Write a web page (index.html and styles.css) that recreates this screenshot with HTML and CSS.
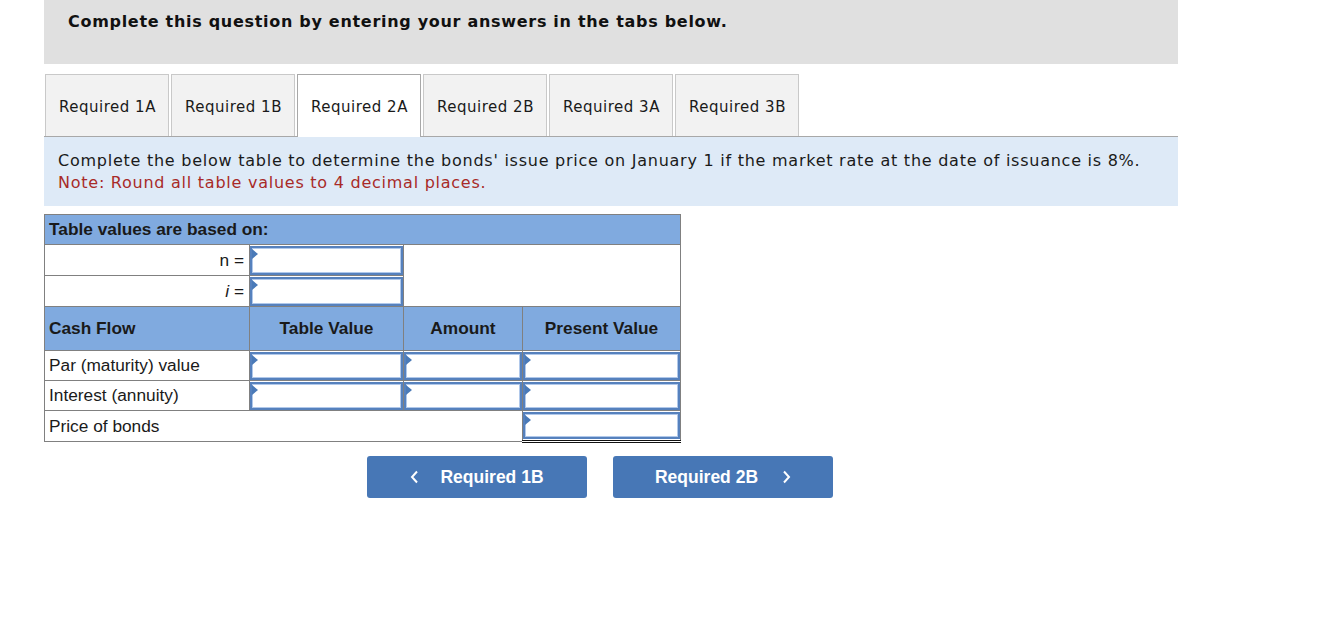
FILE: index.html
```html
<!DOCTYPE html>
<html>
<head>
<meta charset="utf-8">
<link rel="stylesheet" href="styles.css">
</head>
<body>
<div class="page">
  <div class="banner">Complete this question by entering your answers in the tabs below.</div>

  <div class="tabs">
    <div class="tab">Required 1A</div>
    <div class="tab">Required 1B</div>
    <div class="tab active">Required 2A</div>
    <div class="tab">Required 2B</div>
    <div class="tab">Required 3A</div>
    <div class="tab">Required 3B</div>
  </div>

  <div class="instructions">
    <div>Complete the below table to determine the bonds' issue price on January 1 if the market rate at the date of issuance is 8%.</div>
    <div class="note">Note: Round all table values to 4 decimal places.</div>
  </div>

  <table class="grid">
    <colgroup>
      <col class="c1"><col class="c2"><col class="c3"><col class="c4">
    </colgroup>
    <tr class="r-head1">
      <th colspan="4" class="left">Table values are based on:</th>
    </tr>
    <tr class="r-31">
      <td class="label-right">n =</td>
      <td class="inp"><div class="box"><span class="tri"></span></div></td>
      <td colspan="2" rowspan="2" class="blank"></td>
    </tr>
    <tr class="r-31">
      <td class="label-right"><i>i</i> =</td>
      <td class="inp"><div class="box"><span class="tri"></span></div></td>
    </tr>
    <tr class="r-head2">
      <th class="left">Cash Flow</th>
      <th>Table Value</th>
      <th>Amount</th>
      <th>Present Value</th>
    </tr>
    <tr class="r-30">
      <td class="label">Par (maturity) value</td>
      <td class="inp"><div class="box"><span class="tri"></span></div></td>
      <td class="inp"><div class="box"><span class="tri"></span></div></td>
      <td class="inp"><div class="box"><span class="tri"></span></div></td>
    </tr>
    <tr class="r-30">
      <td class="label">Interest (annuity)</td>
      <td class="inp"><div class="box"><span class="tri"></span></div></td>
      <td class="inp"><div class="box"><span class="tri"></span></div></td>
      <td class="inp"><div class="box"><span class="tri"></span></div></td>
    </tr>
    <tr class="r-31">
      <td class="label" colspan="3">Price of bonds</td>
      <td class="inp total"><div class="box"><span class="tri"></span></div></td>
    </tr>
  </table>

  <div class="nav">
    <button class="btn">
      <svg class="chev-l" width="9" height="14" viewBox="0 0 9 14"><polyline points="7,1.5 2,7 7,12.5" fill="none" stroke="#fff" stroke-width="2"/></svg>
      <span>Required 1B</span>
    </button>
    <button class="btn">
      <span>Required 2B</span>
      <svg class="chev-r" width="9" height="14" viewBox="0 0 9 14"><polyline points="2,1.5 7,7 2,12.5" fill="none" stroke="#fff" stroke-width="2"/></svg>
    </button>
  </div>
</div>
</body>
</html>
```

FILE: styles.css
```css
* { box-sizing: border-box; }
html, body { margin: 0; padding: 0; background: #fff; }
body { font-family: "DejaVu Sans", Verdana, sans-serif; color: #1a1a1a; }

.page { margin-left: 44px; width: 1134px; }

.banner {
  background: #e0e0e0;
  height: 64px;
  padding: 11px 0 0 24px;
  font-weight: bold;
  font-size: 16px;
  line-height: 22px;
  letter-spacing: 0.7px;
  color: #111;
}

.tabs {
  display: flex;
  gap: 2px;
  margin-top: 10px;
  padding-left: 1px;
  border-bottom: 1px solid #a8a8a8;
  height: 63px;
}
.tab {
  width: 124px;
  height: 62px;
  background: #f2f2f2;
  border: 1px solid #c9c9c9;
  border-bottom: none;
  font-size: 15px;
  line-height: 62px;
  padding-top: 1px;
  padding-left: 1px;
  letter-spacing: 0.5px;
  text-align: center;
  color: #1a1a1a;
}
.tab.active {
  background: #fff;
  height: 63px;
  border-color: #a8a8a8;
}

.instructions {
  background: #deeaf7;
  padding: 13px 14px 12px 14px;
  font-size: 16px;
  line-height: 22px;
  letter-spacing: 0.75px;
  height: 69px;
}
.note { color: #a82a28; }

.grid {
  margin-top: 8px;
  border-collapse: collapse;
  font-family: "Liberation Sans", Arial, sans-serif;
  font-size: 17.3px;
  color: #1a1a1a;
  table-layout: fixed;
  width: 636px;
}
.c1 { width: 205px; }
.c2 { width: 154px; }
.c3 { width: 119px; }
.c4 { width: 158px; }

.grid td, .grid th {
  border: 1px solid #808080;
  padding: 0;
}
.grid th {
  background: #80aadf;
  font-weight: bold;
  text-align: center;
  color: #1a1a1a;
}
.grid th.left { text-align: left; padding-left: 4px; }

.r-head1 { height: 30px; }
.r-31 { height: 31px; }
.r-30 { height: 30px; }
.r-head2 { height: 44px; }

.label-right { text-align: right; padding-right: 5px !important; }
.label { padding-left: 4px !important; }

.inp { position: relative; }
.box {
  position: relative;
  height: 29px;
  border: 2px solid #5681bd;
  box-shadow: inset 0 0 0 1px #b0c8ea;
  background: #fff;
}
.r-30 .box { height: 28px; }
.tri {
  position: absolute;
  left: 0;
  top: 1px;
  width: 0;
  height: 0;
  border-top: 5px solid transparent;
  border-bottom: 5px solid transparent;
  border-left: 6px solid #4a7ab8;
}
.total { border-top: 1px solid #111 !important; border-bottom: 3px double #111 !important; }
.total .box { height: 27px; }

.nav {
  display: flex;
  gap: 26px;
  margin: 13px 0 0 323px;
}
.btn {
  width: 220px;
  height: 42px;
  background: #4777b6;
  border: none;
  border-radius: 3px;
  color: #fff;
  font-family: "Liberation Sans", Arial, sans-serif;
  font-weight: bold;
  font-size: 17.5px;
  display: flex;
  align-items: center;
  justify-content: center;
  padding: 0;
}
.chev-l { margin-right: 21px; }
.chev-r { margin-left: 24px; }
```
